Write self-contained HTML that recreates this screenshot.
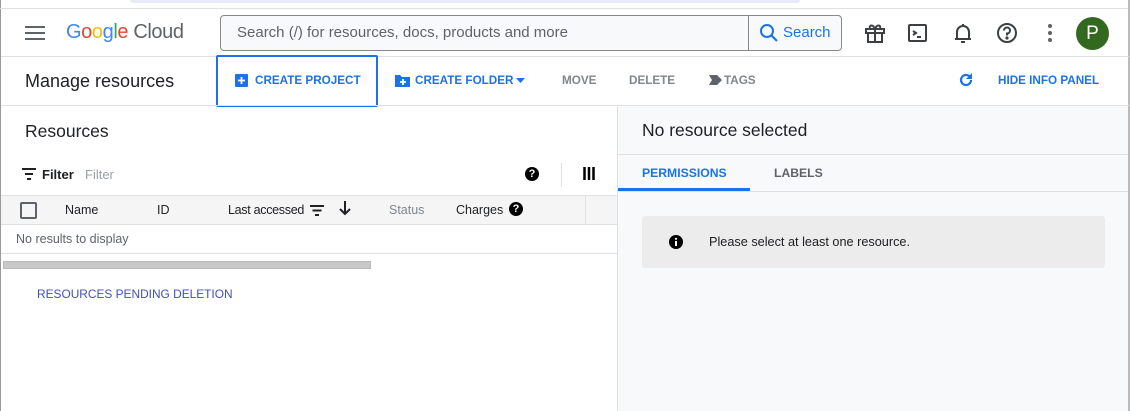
<!DOCTYPE html>
<html><head><style>
*{box-sizing:border-box;margin:0;padding:0}
body{width:1130px;height:411px;overflow:hidden;background:#fff;font-family:"Liberation Sans",sans-serif;position:relative;color:#202124}
.a{position:absolute}
.btn{font-size:11.7px;font-weight:bold;letter-spacing:0}
</style></head><body>
<div class="a" style="left:0;top:0;width:1px;height:411px;background:#999"></div>
<div class="a" style="left:1128px;top:0;width:2px;height:411px;background:#bbb"></div>
<div class="a" style="left:130px;top:0;width:670px;height:3px;background:#e8eaf6;border-radius:0 0 4px 4px"></div>
<div class="a" style="left:1;top:8px;width:1128px;height:1px;background:#e0e0e0"></div>
<!-- header -->
<svg class="a" style="left:24px;top:24px" width="22" height="18" viewBox="0 0 22 18"><path d="M1 3h20M1 9h20M1 15h20" stroke="#5f6368" stroke-width="2"/></svg>
<div class="a" style="left:66px;top:21px;font-size:20px;letter-spacing:-.4px"><span style="color:#4285f4">G</span><span style="color:#ea4335">o</span><span style="color:#fbbc05">o</span><span style="color:#4285f4">g</span><span style="color:#34a853">l</span><span style="color:#ea4335">e</span> <span style="color:#5f6368">Cloud</span></div>
<div class="a" style="left:220px;top:15px;width:622px;height:36px;border:1px solid #888;border-radius:4px;background:#f8f9fa"></div>
<div class="a" style="left:748px;top:16px;width:1px;height:34px;background:#888"></div>
<div class="a" style="left:237px;top:24px;font-size:15px;color:#5f6368">Search (/) for resources, docs, products and more</div>
<svg class="a" style="left:759px;top:23px" width="20" height="20" viewBox="0 0 20 20"><circle cx="8" cy="8" r="6" fill="none" stroke="#1a73e8" stroke-width="2"/><path d="M12.5 12.5L18 18" stroke="#1a73e8" stroke-width="2.2"/></svg>
<div class="a" style="left:783px;top:24px;font-size:15px;color:#1a73e8">Search</div>
<svg class="a" style="left:864px;top:22px" width="22" height="22" viewBox="0 0 22 22" fill="none" stroke="#3c4043" stroke-width="2"><rect x="2" y="7" width="18" height="4"/><rect x="4" y="11" width="14" height="9"/><path d="M11 7v13M11 7C9 2 5 3 6 6M11 7c2-5 6-4 5-1"/></svg>
<svg class="a" style="left:907px;top:22px" width="22" height="22" viewBox="0 0 22 22" fill="none" stroke="#3c4043" stroke-width="2"><rect x="2" y="3" width="17" height="16" rx="1"/><path d="M6 9l3 2-3 2M10 15h4"/></svg>
<svg class="a" style="left:952px;top:21px" width="22" height="24" viewBox="0 0 22 24" fill="none" stroke="#3c4043" stroke-width="2"><path d="M5 18V11a6 6 0 0 1 12 0v7M3 18h16M9 21h4M11 3v2"/></svg>
<svg class="a" style="left:996px;top:22px" width="22" height="22" viewBox="0 0 22 22" fill="none" stroke="#3c4043" stroke-width="2"><circle cx="11" cy="11" r="9"/><path d="M8 8.5a3 3 0 1 1 3 3v2"/><circle cx="11" cy="16" r=".6" fill="#3c4043"/></svg>
<svg class="a" style="left:1046px;top:23px" width="8" height="20"><circle cx="4" cy="3" r="2" fill="#5f6368"/><circle cx="4" cy="10" r="2" fill="#5f6368"/><circle cx="4" cy="17" r="2" fill="#5f6368"/></svg>
<div class="a" style="left:1076px;top:17px;width:33px;height:33px;border-radius:50%;background:#33691e;color:#fff;font-size:19px;text-align:center;line-height:33px">P</div>
<div class="a" style="left:1px;top:56px;width:1128px;height:1px;background:#e0e0e0"></div>
<!-- toolbar -->
<div class="a" style="left:25px;top:71px;font-size:18px">Manage resources</div>
<div class="a" style="left:216px;top:55px;width:162px;height:52px;border:2px solid #1a73e8;border-radius:2px"></div>
<svg class="a" style="left:235px;top:74px" width="13" height="13"><rect width="13" height="13" rx="1" fill="#1a73e8"/><path d="M6.5 3v7M3 6.5h7" stroke="#fff" stroke-width="1.8"/></svg>
<div class="a btn" style="left:255px;top:74px;color:#1a73e8">CREATE PROJECT</div>
<svg class="a" style="left:395px;top:74px" width="15" height="13" viewBox="0 0 15 13"><path d="M0 1h5l2 2h8v10H0z" fill="#1a73e8"/><path d="M8 5v6M5 8h6" stroke="#fff" stroke-width="1.8"/></svg>
<div class="a btn" style="left:415px;top:74px;color:#1a73e8">CREATE FOLDER</div>
<svg class="a" style="left:516px;top:78px" width="9" height="5"><path d="M0 0h9L4.5 5z" fill="#1a73e8"/></svg>
<div class="a btn" style="left:562px;top:74px;color:#80868b">MOVE</div>
<div class="a btn" style="left:629px;top:74px;color:#80868b">DELETE</div>
<svg class="a" style="left:709px;top:75px" width="13" height="10"><path d="M0 0h8l5 5-5 5H0l3-5z" fill="#5f6368"/></svg>
<div class="a btn" style="left:724px;top:74px;color:#80868b">TAGS</div>
<svg class="a" style="left:958px;top:72px" width="16" height="16" viewBox="0 0 16 16" fill="none"><path d="M13 8a5 5 0 1 1-1.5-3.6" stroke="#1a73e8" stroke-width="2.2"/><path d="M14 1v6H8z" fill="#1a73e8"/></svg>
<div class="a btn" style="left:998px;top:74px;color:#1a73e8">HIDE INFO PANEL</div>
<div class="a" style="left:1px;top:105px;width:1128px;height:1px;background:#e0e0e0"></div>
<!-- left -->
<div class="a" style="left:25px;top:121px;font-size:17.5px">Resources</div>
<svg class="a" style="left:22px;top:168px" width="14" height="12"><path d="M0 1h14M3 6h8M5 11h4" stroke="#202124" stroke-width="2"/></svg>
<div class="a" style="left:42px;top:167px;font-size:13px;font-weight:bold">Filter</div>
<div class="a" style="left:85px;top:167px;font-size:13px;color:#9aa0a6">Filter</div>
<div class="a" style="left:525px;top:167px;width:14px;height:14px;border-radius:50%;background:#000;color:#fff;font-size:11px;font-weight:bold;text-align:center;line-height:14px">?</div>
<div class="a" style="left:561px;top:163px;width:1px;height:24px;background:#e0e0e0"></div>
<svg class="a" style="left:583px;top:167px" width="12" height="13"><path d="M1.5 0v13M6 0v13M10.5 0v13" stroke="#000" stroke-width="2.5"/></svg>
<div class="a" style="left:1px;top:195px;width:616px;height:30px;background:#f5f5f5;border-top:1px solid #e0e0e0;border-bottom:1px solid #e0e0e0"></div>
<div class="a" style="left:585px;top:195px;width:1px;height:30px;background:#e0e0e0"></div>
<div class="a" style="left:20px;top:202px;width:17px;height:17px;border:2px solid #5f6368;border-radius:2px"></div>
<div class="a" style="left:65px;top:203px;font-size:12.5px">Name</div>
<div class="a" style="left:157px;top:203px;font-size:12.5px">ID</div>
<div class="a" style="left:228px;top:203px;font-size:12.5px;letter-spacing:-.3px">Last accessed</div>
<svg class="a" style="left:310px;top:205px" width="14" height="11"><path d="M0 1h14M2.5 5.5h9M5 10h4" stroke="#202124" stroke-width="2"/></svg>
<svg class="a" style="left:338px;top:201px" width="14" height="15"><path d="M7 0v13M2 8l5 5 5-5" stroke="#202124" stroke-width="2" fill="none"/></svg>
<div class="a" style="left:389px;top:203px;font-size:12.5px;color:#80868b">Status</div>
<div class="a" style="left:456px;top:203px;font-size:12.5px">Charges</div>
<div class="a" style="left:509px;top:202px;width:14px;height:14px;border-radius:50%;background:#000;color:#fff;font-size:11px;font-weight:bold;text-align:center;line-height:14px">?</div>
<div class="a" style="left:16px;top:232px;font-size:12.5px;color:#5f6368">No results to display</div>
<div class="a" style="left:1px;top:253px;width:616px;height:1px;background:#e0e0e0"></div>
<div class="a" style="left:3px;top:261px;width:368px;height:8px;background:#c8c8c8;border:1px solid #bbb"></div>
<div class="a" style="left:37px;top:287px;font-size:11.9px;color:#3f51b5">RESOURCES PENDING DELETION</div>
<!-- right -->
<div class="a" style="left:617px;top:106px;width:511px;height:305px;background:#f8f9fa;border-left:1px solid #e0e0e0"></div>
<div class="a" style="left:642px;top:120px;font-size:17.5px">No resource selected</div>
<div class="a" style="left:618px;top:154px;width:510px;height:1px;background:#e0e0e0"></div>
<div class="a btn" style="left:642px;top:166px;color:#1a73e8;font-size:12.2px">PERMISSIONS</div>
<div class="a btn" style="left:774px;top:166px;color:#5f6368;font-size:12.2px">LABELS</div>
<div class="a" style="left:618px;top:188px;width:132px;height:3px;background:#1a73e8"></div>
<div class="a" style="left:618px;top:191px;width:510px;height:1px;background:#e0e0e0"></div>
<div class="a" style="left:642px;top:216px;width:463px;height:52px;background:#ececec;border-radius:3px"></div>
<svg class="a" style="left:669px;top:235px" width="14" height="14"><circle cx="7" cy="7" r="7" fill="#000"/><path d="M7 6v5" stroke="#fff" stroke-width="2"/><circle cx="7" cy="3.8" r="1.1" fill="#fff"/></svg>
<div class="a" style="left:709px;top:235px;font-size:12.7px">Please select at least one resource.</div>
</body></html>
